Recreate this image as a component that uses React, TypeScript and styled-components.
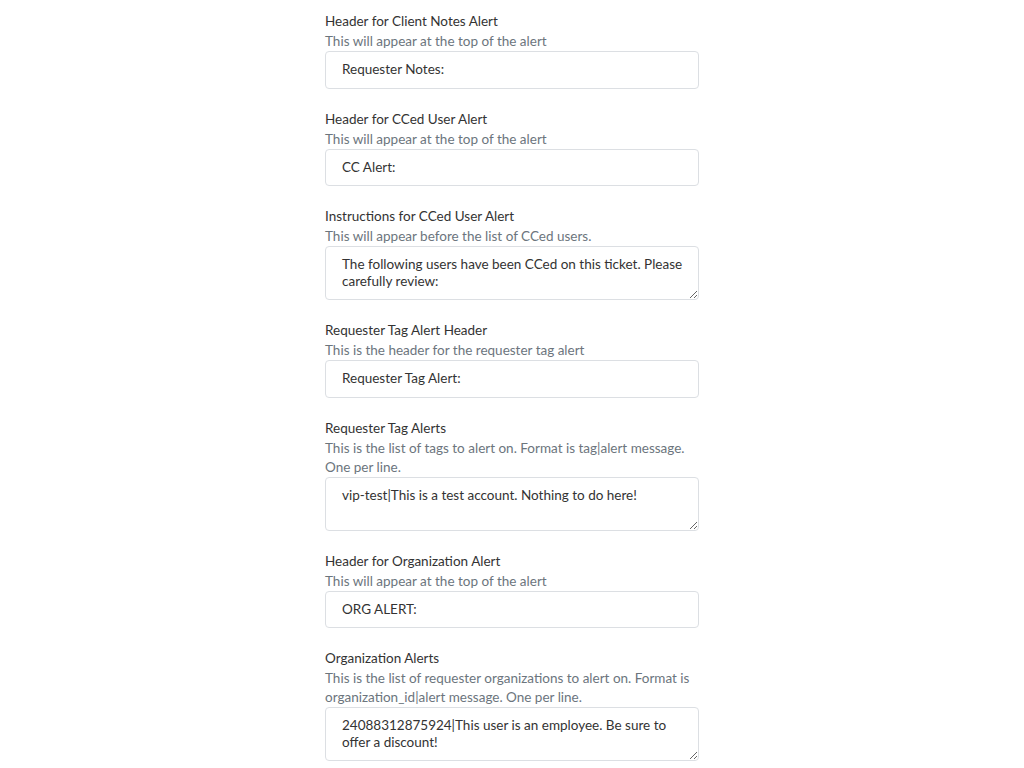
import React from "react";
import styled, { createGlobalStyle } from "styled-components";

const Global = createGlobalStyle`
  html, body { margin: 0; padding: 0; background: #fff; }
  body {
    font-family: Lato, "Open Sans", sans-serif;
    font-size: 13.5px;
    color: #333;
  }
`;

const Page = styled.main`
  width: 374px;
  margin: 0 auto;
  padding-top: 11px;
  display: flex;
  flex-direction: column;
  gap: 20px;
`;

const Field = styled.div`
  display: flex;
  flex-direction: column;
`;

const Label = styled.label`
  font-size: 13.5px;
  line-height: 20px;
  color: #333;
`;

const Help = styled.div`
  font-size: 13.5px;
  line-height: 19px;
  color: #6c757d;
  margin-top: 1px;
`;

const Input = styled.input`
  box-sizing: border-box;
  height: 37.6px;
  width: 100%;
  margin: 0;
  padding: 0 15px 1px 16px;
  border: 1px solid #dcdfe3;
  border-radius: 4px;
  font-family: inherit;
  font-size: 13.5px;
  color: #333;
  background: #fff;
  outline: none;
`;

const Area = styled.textarea`
  box-sizing: border-box;
  display: block;
  height: 54px;
  width: 100%;
  margin: 0;
  padding: 9px 4px 8px 16px;
  border: 1px solid #dcdfe3;
  border-radius: 4px;
  font-family: inherit;
  font-size: 13.5px;
  line-height: 17px;
  color: #333;
  background: #fff;
  outline: none;
  resize: vertical;
  overflow: hidden;
`;

type F = { label: string; help: string; value: string; multi?: boolean };

const fields: F[] = [
  { label: "Header for Client Notes Alert", help: "This will appear at the top of the alert", value: "Requester Notes:" },
  { label: "Header for CCed User Alert", help: "This will appear at the top of the alert", value: "CC Alert:" },
  {
    label: "Instructions for CCed User Alert",
    help: "This will appear before the list of CCed users.",
    value: "The following users have been CCed on this ticket. Please carefully review:",
    multi: true,
  },
  { label: "Requester Tag Alert Header", help: "This is the header for the requester tag alert", value: "Requester Tag Alert:" },
  {
    label: "Requester Tag Alerts",
    help: "This is the list of tags to alert on. Format is tag|alert message. One per line.",
    value: "vip-test|This is a test account. Nothing to do here!",
    multi: true,
  },
  { label: "Header for Organization Alert", help: "This will appear at the top of the alert", value: "ORG ALERT:" },
  {
    label: "Organization Alerts",
    help: "This is the list of requester organizations to alert on. Format is organization_id|alert message. One per line.",
    value: "24088312875924|This user is an employee. Be sure to offer a discount!",
    multi: true,
  },
];

export default function App() {
  return (
    <>
      <Global />
      <Page>
        {fields.map((f) => (
          <Field key={f.label}>
            <Label>{f.label}</Label>
            <Help>{f.help}</Help>
            {f.multi ? <Area defaultValue={f.value} /> : <Input defaultValue={f.value} />}
          </Field>
        ))}
      </Page>
    </>
  );
}
